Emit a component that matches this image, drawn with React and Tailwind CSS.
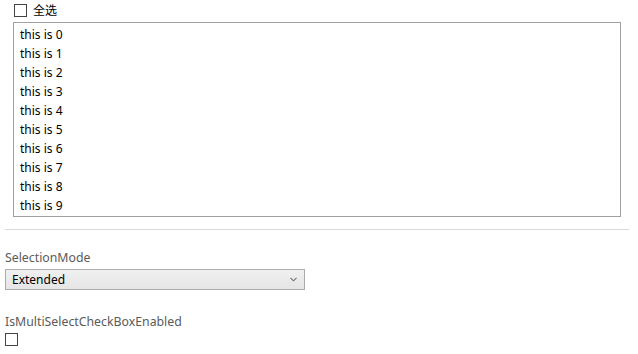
import React from "react";

const items = Array.from({ length: 10 }, (_, i) => `this is ${i}`);

export default function App() {
  return (
    <div
      className="w-[638px] h-[354px] bg-white overflow-hidden text-[12px] text-[#000]"
      style={{ fontFamily: '"Noto Sans", "Noto Sans CJK SC", sans-serif' }}
    >
      <div className="flex items-center h-[13px] mt-[4px] ml-[14px]">
        <div className="w-[13px] h-[13px] border border-[#444] bg-white" />
        <span className="ml-[6px] leading-[13px]">全选</span>
      </div>
      <div className="mt-[5px] ml-[13px] w-[608px] h-[195px] border border-[#a0a0a0] pt-[2px]">
        {items.map((t) => (
          <div key={t} className="h-[19px] leading-[19px] pl-[6px]">
            {t}
          </div>
        ))}
      </div>
      <div className="mt-[12px] ml-[5px] w-[624px] h-px bg-[#d9d9d9]" />
      <div className="mt-[20px] ml-[5px] leading-[16px] text-[#5a5a5a] text-[12.3px]">SelectionMode</div>
      <div className="mt-[3px] ml-[5px] w-[300px] h-[21px] border border-[#acacac] bg-gradient-to-b from-[#f0f0f0] to-[#e5e5e5] flex items-center justify-between pl-[6px] pr-[7px]">
        <span className="leading-[19px]">Extended</span>
        <svg width="7" height="5" viewBox="0 0 7 5">
          <path d="M0.5 0.8 L3.5 3.8 L6.5 0.8" stroke="#707070" strokeWidth="1.1" fill="none" />
        </svg>
      </div>
      <div className="mt-[24px] ml-[5px] leading-[16px] text-[#5a5a5a] text-[12.3px]">IsMultiSelectCheckBoxEnabled</div>
      <div className="mt-[3px] ml-[5px] w-[13px] h-[13px] border border-[#444] bg-white" />
    </div>
  );
}
